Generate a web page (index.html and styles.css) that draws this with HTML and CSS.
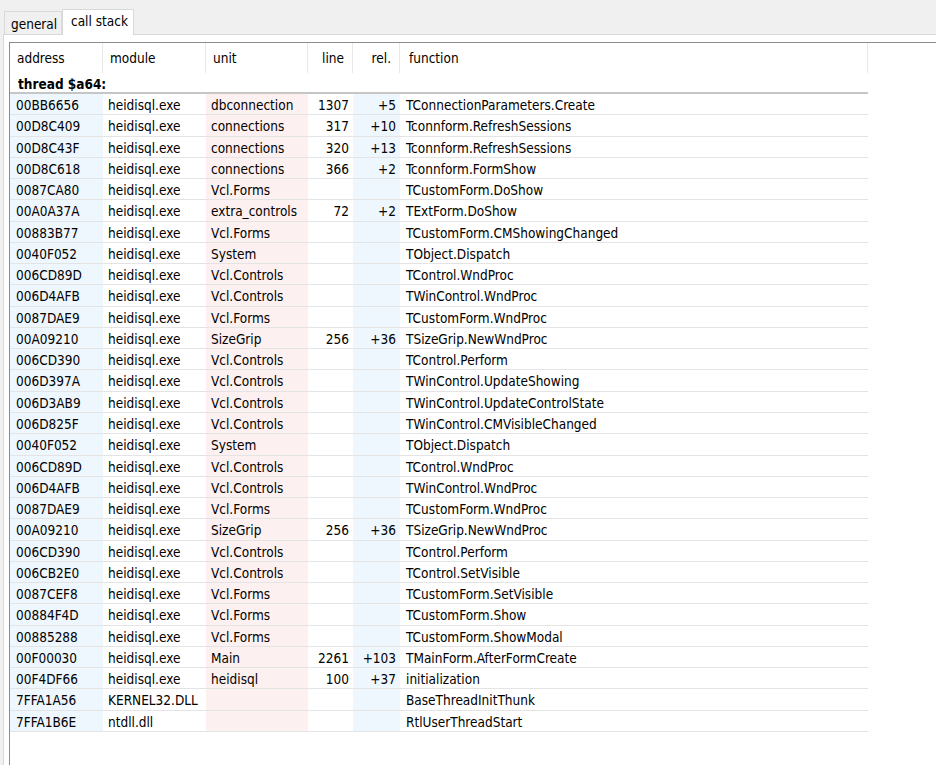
FILE: index.html
```html
<!DOCTYPE html>
<html>
<head>
<meta charset="utf-8">
<title>call stack</title>
<link rel="stylesheet" href="styles.css">
</head>
<body>
<div class="tabs">
  <div class="tab">general</div>
  <div class="tab active">call stack</div>
</div>
<div class="panel">
  <div class="list">
    <div class="head">
      <div class="c addr">address</div>
      <div class="c mod">module</div>
      <div class="c unit">unit</div>
      <div class="c line num">line</div>
      <div class="c rel num">rel.</div>
      <div class="c fn">function</div>
    </div>
    <div class="thread">thread $a64:</div>
    <div class="rows" id="rows">
      <div class="row"><div class="c addr">00BB6656</div><div class="c mod">heidisql.exe</div><div class="c unit">dbconnection</div><div class="c line num">1307</div><div class="c rel num">+5</div><div class="c fn">TConnectionParameters.Create</div></div>
      <div class="row"><div class="c addr">00D8C409</div><div class="c mod">heidisql.exe</div><div class="c unit">connections</div><div class="c line num">317</div><div class="c rel num">+10</div><div class="c fn">Tconnform.RefreshSessions</div></div>
      <div class="row"><div class="c addr">00D8C43F</div><div class="c mod">heidisql.exe</div><div class="c unit">connections</div><div class="c line num">320</div><div class="c rel num">+13</div><div class="c fn">Tconnform.RefreshSessions</div></div>
      <div class="row"><div class="c addr">00D8C618</div><div class="c mod">heidisql.exe</div><div class="c unit">connections</div><div class="c line num">366</div><div class="c rel num">+2</div><div class="c fn">Tconnform.FormShow</div></div>
      <div class="row"><div class="c addr">0087CA80</div><div class="c mod">heidisql.exe</div><div class="c unit">Vcl.Forms</div><div class="c line num"></div><div class="c rel num"></div><div class="c fn">TCustomForm.DoShow</div></div>
      <div class="row"><div class="c addr">00A0A37A</div><div class="c mod">heidisql.exe</div><div class="c unit">extra_controls</div><div class="c line num">72</div><div class="c rel num">+2</div><div class="c fn">TExtForm.DoShow</div></div>
      <div class="row"><div class="c addr">00883B77</div><div class="c mod">heidisql.exe</div><div class="c unit">Vcl.Forms</div><div class="c line num"></div><div class="c rel num"></div><div class="c fn">TCustomForm.CMShowingChanged</div></div>
      <div class="row"><div class="c addr">0040F052</div><div class="c mod">heidisql.exe</div><div class="c unit">System</div><div class="c line num"></div><div class="c rel num"></div><div class="c fn">TObject.Dispatch</div></div>
      <div class="row"><div class="c addr">006CD89D</div><div class="c mod">heidisql.exe</div><div class="c unit">Vcl.Controls</div><div class="c line num"></div><div class="c rel num"></div><div class="c fn">TControl.WndProc</div></div>
      <div class="row"><div class="c addr">006D4AFB</div><div class="c mod">heidisql.exe</div><div class="c unit">Vcl.Controls</div><div class="c line num"></div><div class="c rel num"></div><div class="c fn">TWinControl.WndProc</div></div>
      <div class="row"><div class="c addr">0087DAE9</div><div class="c mod">heidisql.exe</div><div class="c unit">Vcl.Forms</div><div class="c line num"></div><div class="c rel num"></div><div class="c fn">TCustomForm.WndProc</div></div>
      <div class="row"><div class="c addr">00A09210</div><div class="c mod">heidisql.exe</div><div class="c unit">SizeGrip</div><div class="c line num">256</div><div class="c rel num">+36</div><div class="c fn">TSizeGrip.NewWndProc</div></div>
      <div class="row"><div class="c addr">006CD390</div><div class="c mod">heidisql.exe</div><div class="c unit">Vcl.Controls</div><div class="c line num"></div><div class="c rel num"></div><div class="c fn">TControl.Perform</div></div>
      <div class="row"><div class="c addr">006D397A</div><div class="c mod">heidisql.exe</div><div class="c unit">Vcl.Controls</div><div class="c line num"></div><div class="c rel num"></div><div class="c fn">TWinControl.UpdateShowing</div></div>
      <div class="row"><div class="c addr">006D3AB9</div><div class="c mod">heidisql.exe</div><div class="c unit">Vcl.Controls</div><div class="c line num"></div><div class="c rel num"></div><div class="c fn">TWinControl.UpdateControlState</div></div>
      <div class="row"><div class="c addr">006D825F</div><div class="c mod">heidisql.exe</div><div class="c unit">Vcl.Controls</div><div class="c line num"></div><div class="c rel num"></div><div class="c fn">TWinControl.CMVisibleChanged</div></div>
      <div class="row"><div class="c addr">0040F052</div><div class="c mod">heidisql.exe</div><div class="c unit">System</div><div class="c line num"></div><div class="c rel num"></div><div class="c fn">TObject.Dispatch</div></div>
      <div class="row"><div class="c addr">006CD89D</div><div class="c mod">heidisql.exe</div><div class="c unit">Vcl.Controls</div><div class="c line num"></div><div class="c rel num"></div><div class="c fn">TControl.WndProc</div></div>
      <div class="row"><div class="c addr">006D4AFB</div><div class="c mod">heidisql.exe</div><div class="c unit">Vcl.Controls</div><div class="c line num"></div><div class="c rel num"></div><div class="c fn">TWinControl.WndProc</div></div>
      <div class="row"><div class="c addr">0087DAE9</div><div class="c mod">heidisql.exe</div><div class="c unit">Vcl.Forms</div><div class="c line num"></div><div class="c rel num"></div><div class="c fn">TCustomForm.WndProc</div></div>
      <div class="row"><div class="c addr">00A09210</div><div class="c mod">heidisql.exe</div><div class="c unit">SizeGrip</div><div class="c line num">256</div><div class="c rel num">+36</div><div class="c fn">TSizeGrip.NewWndProc</div></div>
      <div class="row"><div class="c addr">006CD390</div><div class="c mod">heidisql.exe</div><div class="c unit">Vcl.Controls</div><div class="c line num"></div><div class="c rel num"></div><div class="c fn">TControl.Perform</div></div>
      <div class="row"><div class="c addr">006CB2E0</div><div class="c mod">heidisql.exe</div><div class="c unit">Vcl.Controls</div><div class="c line num"></div><div class="c rel num"></div><div class="c fn">TControl.SetVisible</div></div>
      <div class="row"><div class="c addr">0087CEF8</div><div class="c mod">heidisql.exe</div><div class="c unit">Vcl.Forms</div><div class="c line num"></div><div class="c rel num"></div><div class="c fn">TCustomForm.SetVisible</div></div>
      <div class="row"><div class="c addr">00884F4D</div><div class="c mod">heidisql.exe</div><div class="c unit">Vcl.Forms</div><div class="c line num"></div><div class="c rel num"></div><div class="c fn">TCustomForm.Show</div></div>
      <div class="row"><div class="c addr">00885288</div><div class="c mod">heidisql.exe</div><div class="c unit">Vcl.Forms</div><div class="c line num"></div><div class="c rel num"></div><div class="c fn">TCustomForm.ShowModal</div></div>
      <div class="row"><div class="c addr">00F00030</div><div class="c mod">heidisql.exe</div><div class="c unit">Main</div><div class="c line num">2261</div><div class="c rel num">+103</div><div class="c fn">TMainForm.AfterFormCreate</div></div>
      <div class="row"><div class="c addr">00F4DF66</div><div class="c mod">heidisql.exe</div><div class="c unit">heidisql</div><div class="c line num">100</div><div class="c rel num">+37</div><div class="c fn">initialization</div></div>
      <div class="row"><div class="c addr">7FFA1A56</div><div class="c mod">KERNEL32.DLL</div><div class="c unit"></div><div class="c line num"></div><div class="c rel num"></div><div class="c fn">BaseThreadInitThunk</div></div>
      <div class="row"><div class="c addr">7FFA1B6E</div><div class="c mod">ntdll.dll</div><div class="c unit"></div><div class="c line num"></div><div class="c rel num"></div><div class="c fn">RtlUserThreadStart</div></div>
    </div>
  </div>
</div>
</body>
</html>
```
FILE: styles.css
```css
html, body {
  margin: 0;
  padding: 0;
  height: 100%;
  overflow: hidden;
}
body {
  background: #f0f0f0;
  font-family: "DejaVu Sans Condensed", "DejaVu Sans", sans-serif;
  font-size: 13.5px;
  color: #000;
  display: flex;
  flex-direction: column;
}
.tabs {
  display: flex;
  align-items: flex-end;
  height: 34px;
  flex: none;
  padding-left: 4px;
  box-sizing: border-box;
}
.tab {
  box-sizing: border-box;
  height: 23px;
  width: 58px;
  border: 1px solid #d9d9d9;
  border-bottom: none;
  background: #f0f0f0;
  padding: 4px 0 0 6px;
  line-height: 16px;
}
.tab.active {
  height: 26px;
  width: 72px;
  background: #fff;
  padding: 3px 0 0 8px;
  margin-bottom: -1px;
  position: relative;
  z-index: 1;
}
.panel {
  flex: 1;
  min-height: 0;
  margin-left: 3px;
  box-sizing: border-box;
  border-top: 1px solid #d9d9d9;
  border-left: 1px solid #d9d9d9;
  background: #fff;
  padding: 7px 0 0 5px;
  display: flex;
  overflow: hidden;
}
.list {
  flex: 1;
  min-width: 0;
  border-top: 1px solid #8c8c8c;
  border-left: 1px solid #8c8c8c;
  background: #fff;
  overflow: hidden;
}
.head, .row {
  display: flex;
}
.c {
  box-sizing: border-box;
  white-space: nowrap;
  overflow: hidden;
  flex: none;
}
.addr { width: 93px; }
.mod { width: 103px; }
.unit { width: 102px; }
.line { width: 45px; }
.rel { width: 47px; }
.fn { width: 468px; }
.num { text-align: right; }

.head .c {
  height: 30px;
  line-height: 31px;
  padding: 0 8px 0 7px;
  border-right: 1px solid #e8e8e8;
}
.head .fn { padding-left: 9px; }

.thread {
  width: 858px;
  height: 21px;
  line-height: 22px;
  padding-left: 8px;
  box-sizing: border-box;
  font-weight: bold;
  border-bottom: 2px solid #c6c6c6;
}
.row {
  height: 21.27px;
  box-sizing: border-box;
  border-bottom: 1px solid #e4e4e4;
  width: 858px;
}
.row .c {
  line-height: 22px;
  padding: 0 4px 0 6px;
}
.row .addr, .row .rel { background: #eef6fe; }
.row .unit { background: #fdf0f0; }
.row .mod { padding-left: 5px; }
.row .unit { padding-left: 5px; }
.row .fn { padding-left: 6px; }
```
